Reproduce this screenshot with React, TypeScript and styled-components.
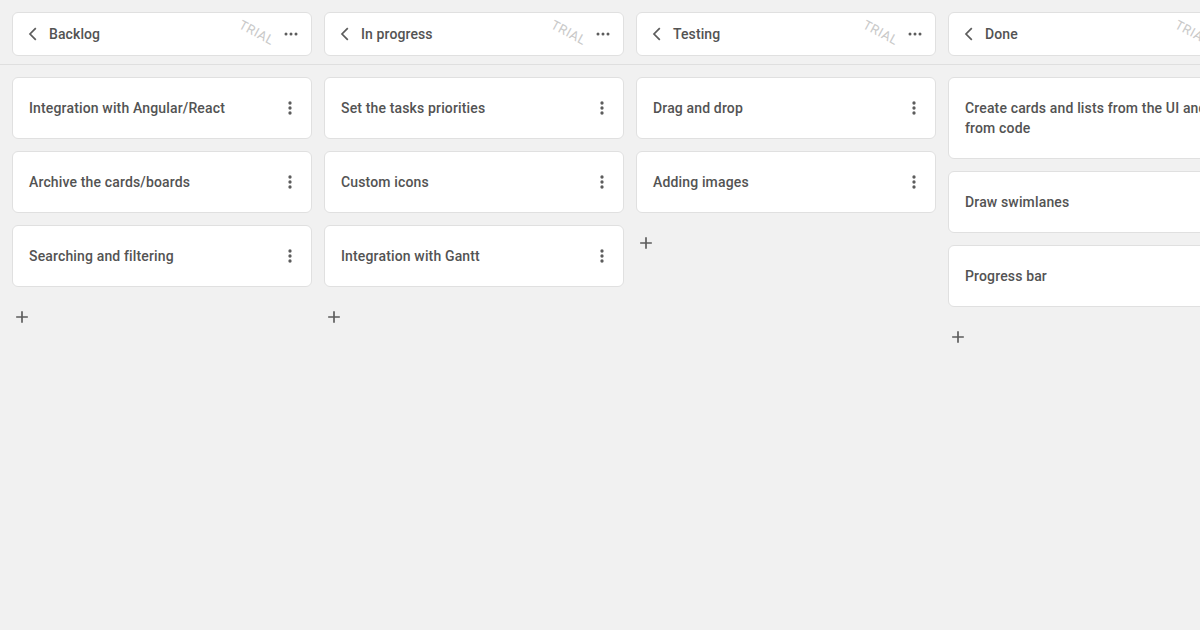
import React from "react";
import styled, {createGlobalStyle} from "styled-components";

const GlobalStyle = createGlobalStyle`
  html, body {
    margin: 0;
    padding: 0;
    background: #f1f1f1;
    font-family: Roboto, "Liberation Sans", Arial, sans-serif;
    font-size: 14px;
    color: #535353;
  }
`

const Board = styled.div`
  width: 1200px;
  height: 630px;
  overflow: hidden;
  display: flex;
  flex-direction: column;
`

const HeaderRow = styled.div`
  display: flex;
  gap: 12px;
  padding: 12px 12px 8px;
  border-bottom: 1px solid #dfdfdf;
`

const Header = styled.div`
  position: relative;
  flex: 0 0 300px;
  box-sizing: border-box;
  height: 44px;
  display: flex;
  align-items: center;
  padding: 0 10px 0 8px;
  background: #fff;
  border: 1px solid #e0e0e0;
  border-radius: 6px;
`

const Title = styled.span`
  flex: 1;
  margin-left: 4px;
  font-weight: 500;
  line-height: 20px;
  letter-spacing: 0.1px;
`

const Trial = styled.span`
  position: absolute;
  right: 36px;
  top: 12px;
  font-size: 13px;
  color: #c9c9c9;
  letter-spacing: 0.5px;
  transform: rotate(28deg);
  pointer-events: none;
`

const Lanes = styled.div`
  display: flex;
  gap: 12px;
  padding: 12px;
  align-items: flex-start;
`

const Lane = styled.div`
  flex: 0 0 300px;
  display: flex;
  flex-direction: column;
  gap: 12px;
`

const Card = styled.div`
  box-sizing: border-box;
  display: flex;
  align-items: flex-start;
  gap: 4px;
  padding: 20px 11px 20px 16px;
  background: #fff;
  border: 1px solid #e0e0e0;
  border-radius: 6px;
`

const CardText = styled.div`
  flex: 1;
  line-height: 20px;
  font-weight: 500;
  letter-spacing: 0.15px;
`

const IconBox = styled.span<{ $size?: number }>`
  flex: 0 0 ${p => p.$size ?? 20}px;
  width: ${p => p.$size ?? 20}px;
  height: ${p => p.$size ?? 20}px;
  display: flex;
  align-items: center;
  justify-content: center;
  color: #5c5c5c;
`

const AddButton = styled.div`
  width: 20px;
  height: 20px;
  margin-top: 8px;
  color: #5c5c5c;
`

const Chevron = () => (
    <svg width="24" height="24" viewBox="0 0 24 24" fill="none" stroke="currentColor" strokeWidth="1.7">
        <path d="M14.8 6.2 9 12l5.8 5.8"/>
    </svg>
)

const DotsH = () => (
    <svg width="20" height="20" viewBox="0 0 24 24" fill="currentColor">
        <circle cx="6" cy="12" r="1.8"/>
        <circle cx="12" cy="12" r="1.8"/>
        <circle cx="18" cy="12" r="1.8"/>
    </svg>
)

const DotsV = () => (
    <svg width="20" height="20" viewBox="0 0 24 24" fill="currentColor">
        <circle cx="12" cy="6" r="2"/>
        <circle cx="12" cy="12" r="2"/>
        <circle cx="12" cy="18" r="2"/>
    </svg>
)

const Plus = () => (
    <svg width="20" height="20" viewBox="0 0 24 24" fill="currentColor">
        <path d="M19 13h-6v6h-2v-6H5v-2h6V5h2v6h6v2z"/>
    </svg>
)

const columns = [
    {title: "Backlog", cards: ["Integration with Angular/React", "Archive the cards/boards", "Searching and filtering"]},
    {title: "In progress", cards: ["Set the tasks priorities", "Custom icons", "Integration with Gantt"]},
    {title: "Testing", cards: ["Drag and drop", "Adding images"]},
    {title: "Done", cards: ["Create cards and lists from the UI and from code", "Draw swimlanes", "Progress bar"]},
]

function App() {
    return (
        <Board>
            <GlobalStyle/>
            <HeaderRow>
                {columns.map(col => (
                    <Header key={col.title}>
                        <IconBox $size={24}><Chevron/></IconBox>
                        <Title>{col.title}</Title>
                        <Trial>TRIAL</Trial>
                        <IconBox><DotsH/></IconBox>
                    </Header>
                ))}
            </HeaderRow>
            <Lanes>
                {columns.map(col => (
                    <Lane key={col.title}>
                        {col.cards.map(text => (
                            <Card key={text}>
                                <CardText>{text}</CardText>
                                <IconBox><DotsV/></IconBox>
                            </Card>
                        ))}
                        <AddButton><Plus/></AddButton>
                    </Lane>
                ))}
            </Lanes>
        </Board>
    );
}

export default App;
